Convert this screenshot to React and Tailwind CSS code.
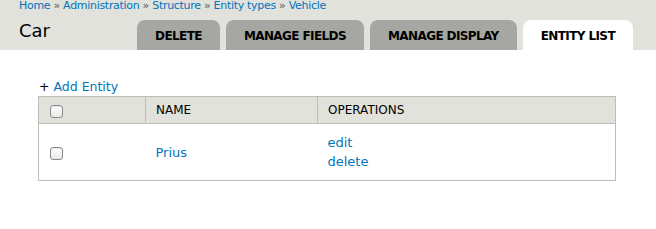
import React from "react";

const font = { fontFamily: '"DejaVu Sans", "Liberation Sans", sans-serif' };

function Checkbox() {
  return (
    <span className="inline-block w-[13px] h-[13px] rounded-[3px] border border-[#8a8a8a] bg-gradient-to-b from-white to-[#e8e8e8] shadow-[inset_0_1px_1px_rgba(0,0,0,0.1)]" />
  );
}

export default function App() {
  const tabs = ["DELETE", "MANAGE FIELDS", "MANAGE DISPLAY"];
  return (
    <div className="w-[656px] h-[229px] bg-white text-black" style={font}>
      <div className="bg-[#e1e2dc] h-[50px] pl-[19px] pr-[23px] flex flex-col">
        <div className="text-[11px] leading-[13px] tracking-[-0.3px] text-[#0074bd] -mt-[1px]">
          Home <span className="text-[#555]">»</span> Administration <span className="text-[#555]">»</span> Structure <span className="text-[#555]">»</span> Entity types <span className="text-[#555]">»</span> Vehicle
        </div>
        <div className="flex items-end justify-between flex-1">
          <h1 className="text-[18px] leading-[22px] self-start mt-[8px]">Car</h1>
          <ul className="flex gap-[6px]">
            {tabs.map((t) => (
              <li key={t} className="h-[30px] px-[18px] rounded-t-[8px] bg-[#a6a7a2] flex items-center font-bold text-[12px] tracking-[-0.6px] pt-[2px]">
                {t}
              </li>
            ))}
            <li className="h-[30px] px-[18px] rounded-t-[8px] bg-white flex items-center font-bold text-[12px] tracking-[-0.6px] pt-[2px]">
              ENTITY LIST
            </li>
          </ul>
        </div>
      </div>
      <div className="pl-[38px] pt-[28px]">
        <a className="block text-[12.5px] leading-[17px] text-[#0074bd] ml-[1px]">
          <span className="text-black">+</span> Add Entity
        </a>
        <table className="w-[578px] border border-[#bebfb9] border-collapse mt-[1px] text-[12px]">
          <thead>
            <tr className="bg-[#e1e2dc] h-[27px]">
              <th className="w-[107px] border border-[#bebfb9] text-left pl-[11px] font-normal align-middle">
                <div className="flex pt-[2px]"><Checkbox /></div>
              </th>
              <th className="w-[172px] border border-[#bebfb9] text-left pl-[10px] font-normal">NAME</th>
              <th className="border border-[#bebfb9] text-left pl-[10px] font-normal">OPERATIONS</th>
            </tr>
          </thead>
          <tbody>
            <tr className="h-[57px]">
              <td className="pl-[11px] align-middle">
                <div className="flex pt-[2px]"><Checkbox /></div>
              </td>
              <td className="pl-[10px] text-[#0074bd] text-[13px] pt-[2px]">Prius</td>
              <td className="pl-[10px] text-[#0074bd] text-[13px] leading-[19px]">
                <div>edit</div>
                <div>delete</div>
              </td>
            </tr>
          </tbody>
        </table>
      </div>
    </div>
  );
}
